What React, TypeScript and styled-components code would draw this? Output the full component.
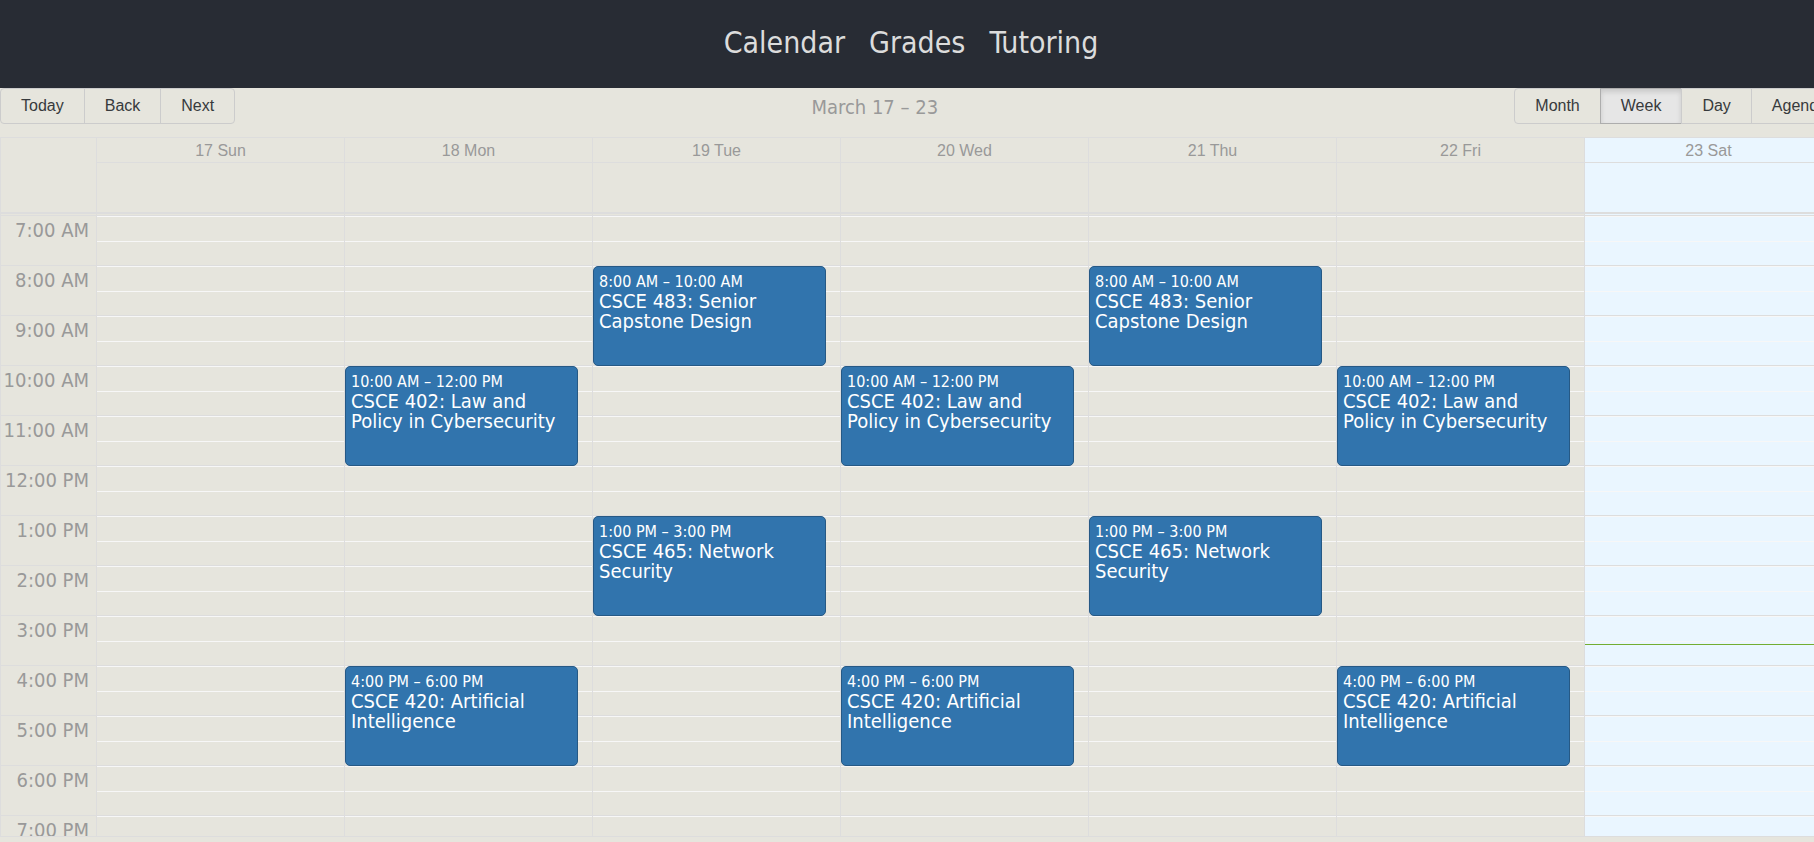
import React, { useLayoutEffect, useRef } from "react";
import styled, { createGlobalStyle } from "styled-components";

const GlobalStyle = createGlobalStyle`
  html, body {
    margin: 0;
    padding: 0;
    background-color: #e6e5dd;
    overflow: hidden;
  }
  * {
    box-sizing: border-box;
  }
`;

const tahoma = `"DejaVu Sans Condensed", "DejaVu Sans", sans-serif`;
const arial = `"Liberation Sans", Arial, sans-serif`;

const HOUR = 50;

const Page = styled.div`
  width: 1848px;
  height: 842px;
  display: flex;
  flex-direction: column;
`;

const HeaderWrapper = styled.header`
  width: 100vw;
  height: 88px;
  background-color: #282c34;
  display: flex;
  align-items: center;
  justify-content: center;
  padding: 0 0 4px 8px;
`;

const Nav = styled.ul`
  display: flex;
  gap: 24px;
  margin: 0;
  padding: 0;
  list-style: none;
`;

const NavLink = styled.a`
  font-family: ${tahoma};
  font-size: 30px;
  color: #dcdcdc;
  text-decoration: none;
  cursor: pointer;
`;

const Toolbar = styled.div`
  display: flex;
  align-items: center;
  height: 36px;
  margin-bottom: 13px;
`;

const ButtonGroup = styled.div`
  display: inline-flex;
  white-space: nowrap;
`;

const ToolButton = styled.button<{ $active?: boolean }>`
  font-family: ${arial};
  font-size: 16px;
  line-height: 22px;
  height: 36px;
  padding: 0 20px;
  color: #373a3c;
  background: ${({ $active }) => ($active ? "#e6e6e6" : "none")};
  border: 1px solid ${({ $active }) => ($active ? "#adadad" : "#ccc")};
  box-shadow: ${({ $active }) =>
    $active ? "inset 0 3px 5px rgba(0, 0, 0, 0.125)" : "none"};
  border-radius: 0;
  margin: 0;
  cursor: pointer;

  & + & {
    margin-left: -1px;
  }
  &:first-child {
    border-radius: 4px 0 0 4px;
  }
  &:last-child {
    border-radius: 0 4px 4px 0;
  }
`;

const ToolbarLabel = styled.span`
  flex: 1;
  text-align: center;
  padding: 2px 10px 0;
  font-family: ${tahoma};
  font-size: 20px;
  color: #999;
`;

const CalendarFrame = styled.div`
  flex: 1;
  display: flex;
  flex-direction: column;
  border: 1px solid #ddd;
  margin-bottom: 5px;
  min-height: 0;
`;

const TimeHeader = styled.div`
  display: flex;
  margin-right: 15px;
`;

const HeaderGutter = styled.div`
  width: 96px;
  flex: none;
  border-right: 1px solid #ddd;
`;

const HeaderDays = styled.div`
  flex: 1;
  display: flex;
  flex-direction: column;
`;

const HeaderRow = styled.div`
  display: flex;
`;

const DayLabel = styled.div<{ $today?: boolean }>`
  flex: 1;
  height: 25px;
  padding-top: 3px;
  text-align: center;
  font-family: ${arial};
  font-size: 16px;
  line-height: 20px;
  color: #999;
  border-bottom: 1px solid #ddd;
  background: ${({ $today }) => ($today ? "#eaf6ff" : "transparent")};

  & + & {
    border-left: 1px solid #ddd;
  }
`;

const AllDayCell = styled.div<{ $today?: boolean }>`
  flex: 1;
  height: 49px;
  background: ${({ $today }) => ($today ? "#eaf6ff" : "transparent")};

  & + & {
    border-left: 1px solid #ddd;
  }
`;

const TimeContent = styled.div`
  flex: 1;
  min-height: 0;
  border-top: 2px solid #ddd;
  overflow: hidden;
  padding-right: 15px;
`;

const TimeGrid = styled.div`
  display: flex;
`;

const Gutter = styled.div`
  width: 96px;
  flex: none;
  border-right: 1px solid #ddd;
`;

const SlotGroup = styled.div`
  height: ${HOUR}px;
  display: flex;
  flex-direction: column;
  border-bottom: 1px solid #ddd;
`;

const GutterLabel = styled.div`
  height: ${HOUR - 1}px;
  padding-right: 7px;
  text-align: right;
  font-family: ${tahoma};
  font-size: 20px;
  line-height: 28px;
  color: #999;
  white-space: nowrap;
`;

const Slot = styled.div`
  flex: 1;
  border-top: 1px solid #f7f7f7;
`;

const DayColumn = styled.div<{ $today?: boolean }>`
  flex: 1;
  position: relative;
  background: ${({ $today }) => ($today ? "#eaf6ff" : "transparent")};

  & + & {
    border-left: 1px solid #ddd;
  }
`;

const EventBox = styled.div`
  position: absolute;
  left: 0;
  right: 14px;
  padding: 2px 5px;
  background-color: #3174ad;
  border: 1px solid #265985;
  border-radius: 5px;
  color: #fff;
  font-family: ${tahoma};
  overflow: hidden;
`;

const EventTime = styled.div`
  font-size: 16px;
  line-height: 19px;
  padding-top: 3px;
  white-space: nowrap;
`;

const EventTitle = styled.div`
  font-size: 20px;
  line-height: 20px;
`;

const NowLine = styled.div`
  position: absolute;
  left: 0;
  right: 0;
  height: 1px;
  background-color: #74ad31;
`;

type CalEvent = { day: number; start: number; end: number; time: string; title: string };

const days = ["17 Sun", "18 Mon", "19 Tue", "20 Wed", "21 Thu", "22 Fri", "23 Sat"];
const TODAY = 6;

const capstone = { time: "8:00 AM – 10:00 AM", title: "CSCE 483: Senior Capstone Design", start: 8, end: 10 };
const network = { time: "1:00 PM – 3:00 PM", title: "CSCE 465: Network Security", start: 13, end: 15 };
const law = { time: "10:00 AM – 12:00 PM", title: "CSCE 402: Law and Policy in Cybersecurity", start: 10, end: 12 };
const ai = { time: "4:00 PM – 6:00 PM", title: "CSCE 420: Artificial Intelligence", start: 16, end: 18 };

const events: CalEvent[] = [
  ...[2, 4].flatMap((day) => [{ ...capstone, day }, { ...network, day }]),
  ...[1, 3, 5].flatMap((day) => [{ ...law, day }, { ...ai, day }]),
];

const hourLabel = (h: number) => {
  const suffix = h < 12 ? "AM" : "PM";
  const hh = h % 12 === 0 ? 12 : h % 12;
  return `${hh}:00 ${suffix}`;
};

const hours = Array.from({ length: 24 }, (_, i) => i);
const nowHours = 15 + 33 / 60;

export default function App() {
  const contentRef = useRef<HTMLDivElement>(null);

  useLayoutEffect(() => {
    // scroll to 7:00 AM like the calendar's scrollToTime
    if (contentRef.current) contentRef.current.scrollTop = 7 * HOUR - 2;
  }, []);

  return (
    <>
      <GlobalStyle />
      <Page>
        <HeaderWrapper>
          <Nav>
            <li>
              <NavLink>Calendar</NavLink>
            </li>
            <li>
              <NavLink>Grades</NavLink>
            </li>
            <li>
              <NavLink>Tutoring</NavLink>
            </li>
          </Nav>
        </HeaderWrapper>

        <Toolbar>
          <ButtonGroup>
            <ToolButton>Today</ToolButton>
            <ToolButton>Back</ToolButton>
            <ToolButton>Next</ToolButton>
          </ButtonGroup>
          <ToolbarLabel>March 17 – 23</ToolbarLabel>
          <ButtonGroup>
            <ToolButton>Month</ToolButton>
            <ToolButton $active>Week</ToolButton>
            <ToolButton>Day</ToolButton>
            <ToolButton>Agenda</ToolButton>
          </ButtonGroup>
        </Toolbar>

        <CalendarFrame>
          <TimeHeader>
            <HeaderGutter />
            <HeaderDays>
              <HeaderRow>
                {days.map((d, i) => (
                  <DayLabel key={d} $today={i === TODAY}>
                    {d}
                  </DayLabel>
                ))}
              </HeaderRow>
              <HeaderRow>
                {days.map((d, i) => (
                  <AllDayCell key={d} $today={i === TODAY} />
                ))}
              </HeaderRow>
            </HeaderDays>
          </TimeHeader>

          <TimeContent ref={contentRef}>
            <TimeGrid>
              <Gutter>
                {hours.map((h) => (
                  <SlotGroup key={h}>
                    <GutterLabel>{hourLabel(h)}</GutterLabel>
                  </SlotGroup>
                ))}
              </Gutter>
              {days.map((d, i) => (
                <DayColumn key={d} $today={i === TODAY}>
                  {hours.map((h) => (
                    <SlotGroup key={h}>
                      <Slot />
                      <Slot />
                    </SlotGroup>
                  ))}
                  {events
                    .filter((e) => e.day === i)
                    .map((e) => (
                      <EventBox
                        key={e.title}
                        style={{ top: e.start * HOUR, height: (e.end - e.start) * HOUR }}
                      >
                        <EventTime>{e.time}</EventTime>
                        <EventTitle>{e.title}</EventTitle>
                      </EventBox>
                    ))}
                  {i === TODAY && <NowLine style={{ top: nowHours * HOUR }} />}
                </DayColumn>
              ))}
            </TimeGrid>
          </TimeContent>
        </CalendarFrame>
      </Page>
    </>
  );
}
